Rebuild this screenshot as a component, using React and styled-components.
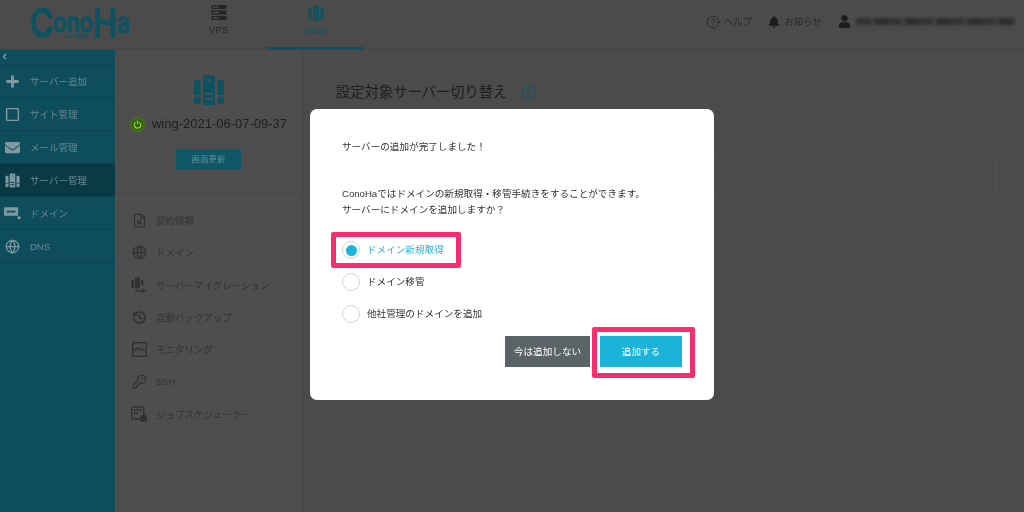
import React from 'react'
import styled, { createGlobalStyle } from 'styled-components'
import { Plus, Globe, CircleHelp, History, KeyRound, FileSearch } from 'lucide-react'
import { FaBell, FaUser, FaEnvelope, FaRegSquare, FaChevronLeft } from 'react-icons/fa'

const GlobalStyle = createGlobalStyle`
  html, body { margin: 0; padding: 0; background: #4b4b4b; }
  body { font-family: "Liberation Sans", "Noto Sans CJK JP", sans-serif; overflow: hidden; }
  * { box-sizing: border-box; }
`

const Page = styled.div`
  position: relative;
  width: 1024px;
  height: 512px;
  overflow: hidden;
  background: #4b4b4b;
  filter: blur(0.3px);
`
const Header = styled.header`
  height: 50px;
  display: flex;
  align-items: stretch;
  border-bottom: 1px solid #444;
`
const LogoBox = styled.div`
  width: 170px;
  padding: 6px 0 0 30px;
`
const LogoSvg = styled.svg`
  display: block;
  font-family: "Inter", "Liberation Sans", sans-serif;
  font-weight: 500;
  fill: #0e5262;
  stroke: #0e5262;
  stroke-width: 1.5px;
`
const LogoTag = styled.text`
  font-family: "Liberation Sans", sans-serif;
  font-weight: 700;
  stroke: none;
`
const Tab = styled.div`
  width: 97px;
  height: 50px;
  display: flex;
  flex-direction: column;
  align-items: center;
  padding-top: 5px;
  font-size: 9.5px;
  color: ${(props) => (props.$active ? '#0e5262' : '#262626')};
  border-bottom: 3px solid ${(props) => (props.$active ? '#0e5262' : 'transparent')};
  span { margin-top: 4px; line-height: 12px; }
`
const HeaderRight = styled.div`
  margin-left: auto;
  padding: 14px 9px 0 0;
  display: flex;
  align-items: flex-start;
  font-size: 9.5px;
  line-height: 16px;
  color: #2a2a2a;
`
const HeaderLink = styled.div`
  display: flex;
  align-items: center;
  gap: 4px;
  margin-right: 16px;
`
const BlurredName = styled.div`
  width: 159px;
  height: 7px;
  margin: 4px 0 0 5px;
  filter: blur(1.5px);
  background: repeating-linear-gradient(90deg, #333 0 14px, #3e3e3e 14px 19px, #2e2e2e 19px 31px);
`
const Body = styled.div`
  display: flex;
  height: 462px;
`
const Sidebar = styled.nav`
  width: 115px;
  background: #0d4d5c;
  color: #6a8a93;
`
const Collapse = styled.div`
  height: 15px;
  padding: 3px 0 0 1px;
  border-bottom: 1px solid #0b4552;
  color: #8aa5ac;
`
const SideItem = styled.div`
  height: 33px;
  display: flex;
  align-items: center;
  gap: 9px;
  padding-left: 4px;
  font-size: 9.5px;
  border-bottom: 1px solid #0b4552;
  background: ${(props) => (props.$active ? '#0a3a46' : 'transparent')};
`
const SideIcon = styled.span`
  width: 17px;
  display: flex;
  justify-content: center;
  color: #7d9aa2;
`
const SubPanel = styled.aside`
  width: 188px;
  background: #4e4e4e;
  border-right: 1px solid #474747;
`
const ServerBox = styled.div`
  height: 144px;
  padding-top: 24px;
  border-bottom: 1px solid #464646;
  display: flex;
  flex-direction: column;
  align-items: center;
`
const StatusRow = styled.div`
  margin-top: 8px;
  display: flex;
  align-items: center;
  gap: 7px;
  font-size: 13px;
  line-height: 20px;
  color: #1f1f1f;
`
const PowerDot = styled.span`
  width: 15px;
  height: 15px;
  border-radius: 50%;
  background: #2f5f12;
  border: 2px solid #3d7316;
  display: flex;
  align-items: center;
  justify-content: center;
`
const RefreshButton = styled.div`
  width: 65px;
  height: 21px;
  margin-top: 15px;
  background: #0f5666;
  color: #5f929d;
  font-size: 8.5px;
  line-height: 21px;
  text-align: center;
`
const SubMenu = styled.ul`
  list-style: none;
  margin: 0;
  padding: 10px 0 0 16px;
`
const SubItem = styled.li`
  height: 32.3px;
  display: flex;
  align-items: center;
  gap: 9px;
  font-size: 9.5px;
  color: #333;
`
const SubIcon = styled.span`
  width: 16px;
  display: flex;
  justify-content: center;
  color: #303030;
`
const Content = styled.main`
  flex: 1;
  padding: 32px 28px 0 33px;
`
const Title = styled.h1`
  margin: 0;
  display: flex;
  align-items: center;
  gap: 14px;
  font-size: 14.3px;
  font-weight: 400;
  line-height: 20px;
  color: #1d1d1d;
  svg { color: #0e5262; }
`
const FaintBox = styled.div`
  height: 38px;
  margin-top: 55px;
  border: 1px solid #515151;
`
const Layer = styled.div`
  position: absolute;
  inset: 0;
  padding-top: 109px;
`
const Modal = styled.div`
  width: 404px;
  height: 291px;
  margin: 0 auto;
  padding: 30px 32px 0;
  background: #fff;
  border-radius: 7px;
  font-size: 9.6px;
  line-height: 16px;
  color: #333;
`
const Message = styled.p`
  margin: ${(props) => props.$gap || 0}px 0 0;
`
const Options = styled.div`
  margin-top: 16px;
`
const Option = styled.div`
  position: relative;
  width: 130px;
  height: 32px;
  display: flex;
  align-items: center;
  gap: 7px;
  white-space: nowrap;
  color: ${(props) => (props.$checked ? '#2cb4d6' : '#333')};
`
const Radio = styled.span`
  flex: none;
  width: 18px;
  height: 18px;
  border-radius: 50%;
  border: 1.5px solid #d6d6d6;
  display: flex;
  align-items: center;
  justify-content: center;
  &::after {
    content: "";
    display: ${(props) => (props.$checked ? 'block' : 'none')};
    width: 11px;
    height: 11px;
    border-radius: 50%;
    background: #1cb3d8;
  }
`
const Actions = styled.div`
  margin-top: 6px;
  display: flex;
  justify-content: flex-end;
  gap: 10px;
`
const Button = styled.div`
  position: relative;
  width: ${(props) => (props.$primary ? 82 : 85)}px;
  height: 31px;
  background: ${(props) => (props.$primary ? '#1cb3d8' : '#5a6368')};
  color: #fff;
  font-size: 9.6px;
  line-height: 31px;
  text-align: center;
`
const Mark = styled.span`
  position: absolute;
  top: ${(props) => props.$t}px;
  right: ${(props) => props.$r}px;
  bottom: ${(props) => props.$b}px;
  left: ${(props) => props.$l}px;
  border: 5px solid #f52f6e;
  border-radius: 2px;
  pointer-events: none;
`

const WingIcon = ({ size = 30, color = '#0e5262', cut = '#4e4e4e' }) => (
  <svg width={size} height={size} viewBox="0 0 32 32" fill={color}>
    <rect x="10" y="1" width="12" height="30" rx="2" />
    <rect x="1" y="6" width="6.5" height="24" rx="1.5" />
    <rect x="24.5" y="6" width="6.5" height="24" rx="1.5" />
    <g fill={cut}>
      <rect x="12" y="19" width="8" height="2" />
      <rect x="12" y="24" width="8" height="2" />
      <rect x="15" y="5" width="2.4" height="2.4" />
      <rect x="1" y="21" width="6.5" height="1.6" />
      <rect x="24.5" y="21" width="6.5" height="1.6" />
    </g>
  </svg>
)

const Logo = () => (
  <LogoSvg width="104" height="36" viewBox="0 0 104 36">
    <g transform="scale(0.81 1)">
      <text x="0" y="31">
        <tspan fontSize="40">C</tspan>
        <tspan fontSize="27" dy="-5">ono</tspan>
        <tspan fontSize="40" dy="5">H</tspan>
        <tspan fontSize="27" dy="-5">a</tspan>
      </text>
    </g>
    <LogoTag x="35" y="32" fontSize="6">by GMO</LogoTag>
  </LogoSvg>
)

const VpsIcon = () => (
  <svg width="16" height="15" viewBox="0 0 16 15" fill="#262626">
    <rect x="0.5" y="0" width="15" height="4" />
    <rect x="0.5" y="5.5" width="15" height="4" />
    <rect x="0.5" y="11" width="15" height="4" />
    <g fill="#5a5a5a">
      <rect x="2" y="1.5" width="6" height="1" />
      <rect x="2" y="7" width="6" height="1" />
      <rect x="2" y="12.5" width="6" height="1" />
    </g>
  </svg>
)

const DomainIcon = () => (
  <svg width="18" height="14" viewBox="0 0 18 14" fill="#7d9aa2">
    <rect x="0" y="1" width="15" height="9" rx="1" />
    <rect x="3" y="4.5" width="9" height="2" fill="#0d4d5c" />
    <circle cx="16" cy="12" r="1.8" />
  </svg>
)

const PowerIcon = () => (
  <svg width="9" height="9" viewBox="0 0 10 10" fill="none" stroke="#9ccf3a" strokeWidth="1.4">
    <path d="M3 2.4a3.6 3.6 0 1 0 4 0" />
    <path d="M5 0.8v4" />
  </svg>
)

const MigrationIcon = () => (
  <svg width="16" height="16" viewBox="0 0 16 16" fill="#303030">
    <rect x="4" y="0.5" width="5" height="11" rx="1" />
    <rect x="0.5" y="3" width="2.5" height="8" rx="0.6" />
    <rect x="10" y="3" width="2.5" height="5" rx="0.6" />
    <path d="M4 13h7v-2l4 3-4 2v-1.5H4z" />
  </svg>
)

const ChartIcon = () => (
  <svg width="15" height="15" viewBox="0 0 15 15" fill="none" stroke="#303030" strokeWidth="1.4">
    <rect x="0.7" y="0.7" width="13.6" height="13.6" />
    <path d="M2 9l3-3 2.5 2 2-1.5L13 9" />
  </svg>
)

const SchedulerIcon = () => (
  <svg width="16" height="16" viewBox="0 0 16 16" fill="none" stroke="#303030" strokeWidth="1.3">
    <rect x="0.7" y="1" width="12" height="12" rx="1" />
    <path d="M3 4h8M3 7h4" />
    <circle cx="12.5" cy="12.5" r="3" fill="#303030" />
  </svg>
)

const sideItems = [
  { label: 'サーバー追加', icon: <Plus size={17} strokeWidth={4} /> },
  { label: 'サイト管理', icon: <FaRegSquare size={15} /> },
  { label: 'メール管理', icon: <FaEnvelope size={15} /> },
  { label: 'サーバー管理', icon: <WingIcon size={15} color="#7d9aa2" cut="#0a3a46" />, active: true },
  { label: 'ドメイン', icon: <DomainIcon /> },
  { label: 'DNS', icon: <Globe size={15} /> },
]

const subItems = [
  { label: '契約情報', icon: <FileSearch size={15} /> },
  { label: 'ドメイン', icon: <Globe size={15} /> },
  { label: 'サーバーマイグレーション', icon: <MigrationIcon /> },
  { label: '自動バックアップ', icon: <History size={15} strokeWidth={2.4} /> },
  { label: 'モニタリング', icon: <ChartIcon /> },
  { label: 'SSH', icon: <KeyRound size={15} /> },
  { label: 'ジョブスケジューラー', icon: <SchedulerIcon /> },
]

const options = ['ドメイン新規取得', 'ドメイン移管', '他社管理のドメインを追加']

export default function App() {
  return (
    <Page>
      <GlobalStyle />
      <Header>
        <LogoBox>
          <Logo />
        </LogoBox>
        <Tab>
          <VpsIcon />
          <span>VPS</span>
        </Tab>
        <Tab $active>
          <WingIcon size={16} cut="#4b4b4b" />
          <span>WING</span>
        </Tab>
        <HeaderRight>
          <HeaderLink>
            <CircleHelp size={14} strokeWidth={1.6} />
            ヘルプ
          </HeaderLink>
          <HeaderLink>
            <FaBell size={12} color="#1c1c1c" />
            お知らせ
          </HeaderLink>
          <FaUser size={13} color="#1c1c1c" style={{ marginTop: 1 }} />
          <BlurredName />
        </HeaderRight>
      </Header>
      <Body>
        <Sidebar>
          <Collapse>
            <FaChevronLeft size={7} style={{ display: 'block' }} />
          </Collapse>
          {sideItems.map((item) => (
            <SideItem key={item.label} $active={item.active}>
              <SideIcon>{item.icon}</SideIcon>
              {item.label}
            </SideItem>
          ))}
        </Sidebar>
        <SubPanel>
          <ServerBox>
            <WingIcon size={32} />
            <StatusRow>
              <PowerDot>
                <PowerIcon />
              </PowerDot>
              wing-2021-06-07-09-37
            </StatusRow>
            <RefreshButton>画面更新</RefreshButton>
          </ServerBox>
          <SubMenu>
            {subItems.map((item) => (
              <SubItem key={item.label}>
                <SubIcon>{item.icon}</SubIcon>
                {item.label}
              </SubItem>
            ))}
          </SubMenu>
        </SubPanel>
        <Content>
          <Title>
            設定対象サーバー切り替え
            <CircleHelp size={15} strokeWidth={1.6} />
          </Title>
          <FaintBox />
        </Content>
      </Body>
      <Layer>
        <Modal>
          <Message>サーバーの追加が完了しました！</Message>
          <Message $gap={31}>
            ConoHaではドメインの新規取得・移管手続きをすることができます。
            <br />
            サーバーにドメインを追加しますか？
          </Message>
          <Options>
            {options.map((label, i) => (
              <Option key={label} $checked={i === 0}>
                <Radio $checked={i === 0} />
                {label}
                {i === 0 && <Mark $t={-2} $r={11} $b={-2} $l={-11} />}
              </Option>
            ))}
          </Options>
          <Actions>
            <Button>今は追加しない</Button>
            <Button $primary>
              追加する
              <Mark $t={-9} $r={-13} $b={-11} $l={-8} />
            </Button>
          </Actions>
        </Modal>
      </Layer>
    </Page>
  )
}
